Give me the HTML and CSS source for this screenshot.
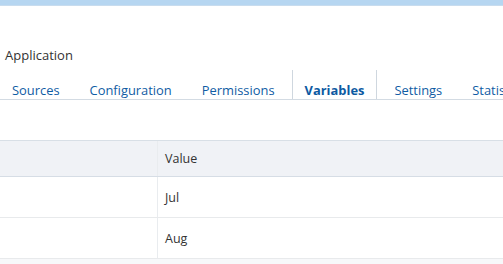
FILE: index.html
```html
<!DOCTYPE html>
<html>
<head>
<meta charset="utf-8">
<link rel="stylesheet" href="styles.css">
</head>
<body>
<div class="topbar"></div>
<div class="title">Application</div>
<nav class="tabs">
  <div class="tab">Sources</div>
  <div class="tab">Configuration</div>
  <div class="tab">Permissions</div>
  <div class="tab active">Variables</div>
  <div class="tab">Settings</div>
  <div class="tab">Statistics</div>
</nav>
<div class="grid">
  <div class="row head">
    <div class="cell key"></div>
    <div class="cell val">Value</div>
  </div>
  <div class="row">
    <div class="cell key"></div>
    <div class="cell val">Jul</div>
  </div>
  <div class="row">
    <div class="cell key"></div>
    <div class="cell val">Aug</div>
  </div>
</div>
</body>
</html>
```
FILE: styles.css
```css
html, body {
  margin: 0;
  padding: 0;
  background: #ffffff;
  font-family: "Open Sans", "Noto Sans", sans-serif;
  font-size: 12px;
  color: #333333;
  overflow: hidden;
}
.topbar {
  height: 5px;
  background: #b6d6f1;
  border-bottom: 1px solid #c8dcee;
}
.title {
  margin-top: 40px;
  padding-left: 5px;
  font-size: 13px;
  line-height: 18px;
  color: #333333;
}
.tabs {
  display: flex;
  margin-top: 6px;
  height: 29px;
  border-bottom: 1px solid #d3dbe3;
  white-space: nowrap;
  margin-left: -1px;
  overflow: hidden;
}
.tab {
  flex: none;
  padding: 0 12px;
  margin-right: 4px;
  border-left: 1px solid transparent;
  border-right: 1px solid transparent;
  color: #0f5ca4;
  font-size: 12.9px;
  line-height: 41px;
  height: 29px;
}
.tab.active {
  border-left-color: #cfd7df;
  border-right-color: #cfd7df;
  font-weight: bold;
  color: #0d5aa2;
}
.grid {
  margin-top: 40px;
  border-top: 1px solid #d8dfe6;
  background: #f7f8fa;
  height: 123px;
}
.row {
  display: flex;
  height: 40px;
  background: #ffffff;
  border-bottom: 1px solid #e8eaec;
}
.row.head {
  height: 35px;
  background: #f0f2f6;
  border-bottom: 1px solid #d6dde5;
}
.cell {
  display: flex;
  align-items: center;
}
.key {
  width: 157px;
  border-right: 1px solid #e9ecef;
}
.val {
  padding-left: 7px;
  font-size: 12.5px;
}
```
